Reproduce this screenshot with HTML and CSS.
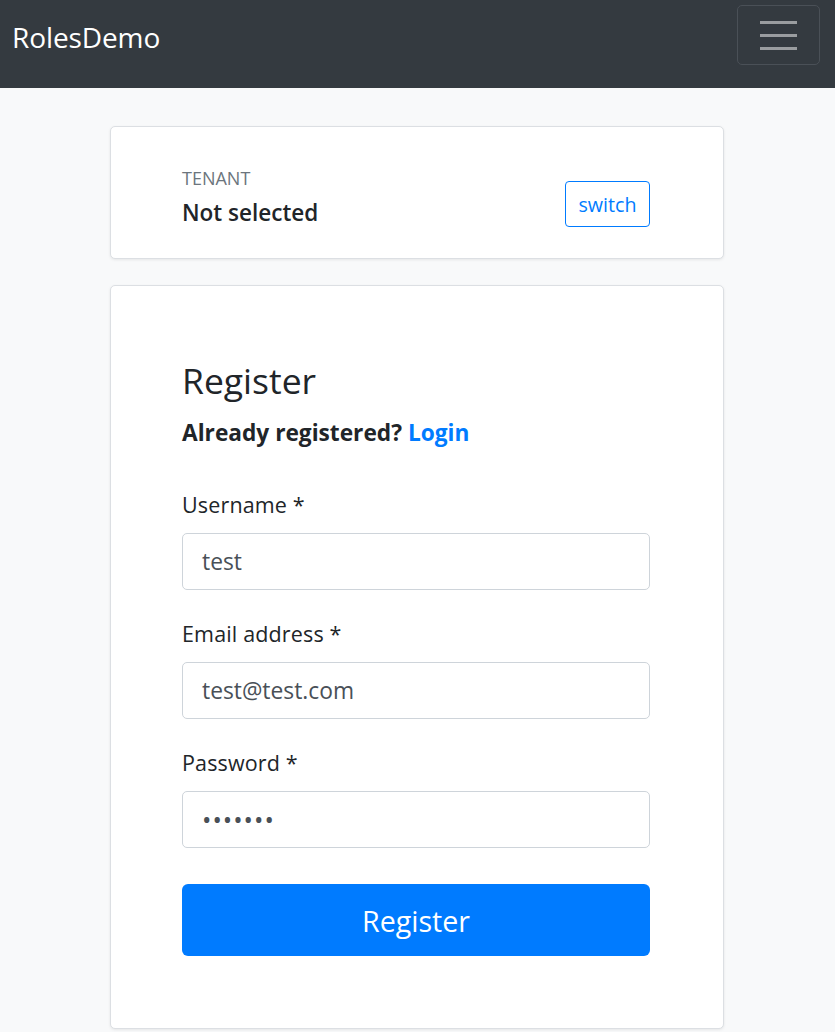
FILE: index.html
```
<!DOCTYPE html>
<html lang="en">
<head>
<meta charset="utf-8">
<title>RolesDemo</title>
<link rel="stylesheet" href="styles.css">
</head>
<body>
<nav class="navbar">
  <a class="brand" href="#">RolesDemo</a>
  <button class="toggler" type="button" aria-label="Toggle navigation">
    <span class="bar"></span><span class="bar"></span><span class="bar"></span>
  </button>
</nav>
<main class="main">
  <section class="card tenant-card">
    <div class="tenant-info">
      <div class="tenant-label">TENANT</div>
      <div class="tenant-name">Not selected</div>
    </div>
    <button class="btn-switch" type="button">switch</button>
  </section>
  <section class="card form-card">
    <h1 class="title">Register</h1>
    <p class="already">Already registered? <a href="#" class="login">Login</a></p>
    <form class="form">
      <div class="field">
        <label class="label">Username *</label>
        <div class="input">test</div>
      </div>
      <div class="field">
        <label class="label">Email address *</label>
        <div class="input">test@test.com</div>
      </div>
      <div class="field">
        <label class="label">Password *</label>
        <div class="input dots">•••••••</div>
      </div>
      <button class="btn-primary" type="button">Register</button>
    </form>
  </section>
</main>
</body>
</html>
```
FILE: styles.css
```
* { box-sizing: border-box; }
html, body { margin: 0; padding: 0; }
body {
  font-family: "Open Sans", "Noto Sans", sans-serif;
  background: #f8f9fa;
  color: #212529;
  height: 1032px;
  overflow: hidden;
}
.navbar {
  height: 88px;
  background: #343a40;
  display: flex;
  justify-content: space-between;
  align-items: flex-start;
  padding: 5px 15px 0 12px;
}
.brand {
  color: #fff;
  text-decoration: none;
  font-size: 28px;
  line-height: 38px;
  margin-top: 13px;
  letter-spacing: -0.1px;
}
.toggler {
  width: 83px;
  height: 60px;
  background: transparent;
  border: 1px solid #4a5057;
  border-radius: 5px;
  display: flex;
  flex-direction: column;
  justify-content: center;
  align-items: center;
  gap: 10px;
  padding: 0;
}
.bar {
  display: block;
  width: 37px;
  height: 3px;
  background: #9a9da0;
}
.main {
  width: 614px;
  margin: 38px 0 0 110px;
  display: flex;
  flex-direction: column;
  gap: 26px;
}
.card {
  background: #fff;
  border: 1px solid #dcdfe3;
  border-radius: 5px;
  box-shadow: 0 1px 3px rgba(0,0,0,.08);
}
.tenant-card {
  height: 133px;
  display: flex;
  align-items: flex-start;
  justify-content: space-between;
  padding: 39px 73px 0 71px;
}
.tenant-label {
  font-size: 18px;
  line-height: 24px;
  color: #6c757d;
}
.tenant-name {
  font-size: 22.5px;
  line-height: 34px;
  font-weight: 600;
  margin-top: 6px;
}
.btn-switch {
  font-family: inherit;
  font-size: 19.7px;
  color: #007bff;
  background: #fff;
  border: 1px solid #007bff;
  border-radius: 4px;
  width: 85px;
  height: 46px;
  padding: 0;
  margin-top: 15px;
}
.form-card {
  height: 744px;
  padding: 72px 73px 0 71px;
}
.title {
  margin: 0;
  font-size: 35.5px;
  font-weight: 400;
  line-height: 44px;
}
.already {
  margin: 15px 0 0;
  font-size: 22.7px;
  line-height: 32px;
  font-weight: 700;
}
.login { color: #007bff; text-decoration: none; }
.form { margin-top: 41px; }
.field { margin-bottom: 29px; }
.label {
  display: block;
  font-size: 21.5px;
  line-height: 30px;
  margin-bottom: 13px;
  letter-spacing: 0.15px;
}
.input {
  height: 57px;
  border: 1px solid #ced4da;
  border-radius: 5px;
  padding: 0 19px;
  font-size: 22.8px;
  line-height: 55px;
  color: #495057;
}
.dots { letter-spacing: 1px; font-size: 25px; }
.btn-primary {
  display: block;
  width: 100%;
  height: 72px;
  margin-top: 36px;
  border: none;
  border-radius: 6px;
  background: #007bff;
  color: #fff;
  font-family: inherit;
  font-size: 28.6px;
}
```
